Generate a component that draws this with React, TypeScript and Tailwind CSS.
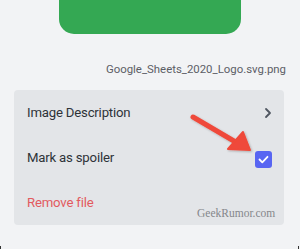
import React from "react";

export default function App() {
  return (
    <div
      className="relative w-[300px] h-[249px] overflow-hidden bg-[#f2f3f5]"
      style={{ fontFamily: "Roboto, 'Open Sans', sans-serif" }}
    >
      <div className="flex flex-col">
        <div className="mx-auto w-[182px] h-[34px] bg-[#34a853] rounded-b-[15px]" />
        <div className="mt-[28px] pr-[14px] text-right text-[11.4px] leading-[14px] text-[#5c5e66]">
          Google_Sheets_2020_Logo.svg.png
        </div>
        <div className="mt-[14px] mx-[14px] w-[270px] h-[135px] rounded-[4px] bg-[#e3e5e8] flex flex-col">
          <div className="h-[46px] flex items-center justify-between pl-[13px] pr-[12px] pt-[1px]">
            <span className="text-[13.2px] tracking-[-0.2px] text-[#2e3338]">Image Description</span>
            <svg width="8" height="12" viewBox="0 0 8 12" fill="none">
              <path d="M2 2l4 4-4 4" stroke="#4f5660" strokeWidth="1.8" strokeLinecap="round" strokeLinejoin="round" />
            </svg>
          </div>
          <div className="h-[46px] flex items-center justify-between pl-[13px] pr-[12px]">
            <span className="text-[13.2px] tracking-[-0.2px] text-[#2e3338]">Mark as spoiler</span>
            <div className="w-[17px] h-[17px] rounded-[3px] bg-[#5865f2] flex items-center justify-center mt-[4px]">
              <svg width="11" height="9" viewBox="0 0 11 9" fill="none">
                <path d="M1.5 4.5l2.8 2.8L9.5 1.8" stroke="white" strokeWidth="1.8" strokeLinecap="round" strokeLinejoin="round" />
              </svg>
            </div>
          </div>
          <div className="h-[46px] flex items-center pl-[13px]">
            <span className="text-[13.2px] tracking-[-0.2px] text-[#e25a5f]">Remove file</span>
          </div>
        </div>
      </div>
      <div
        className="absolute left-[197px] top-[205px] text-[11.5px] text-[#85878b]"
        style={{ fontFamily: "'Liberation Serif', serif" }}
      >
        GeekRumor.com
      </div>
      <svg className="absolute left-[185px] top-[108px]" width="72" height="50" viewBox="0 0 72 50">
        <defs>
          <filter id="sh" x="-20%" y="-20%" width="140%" height="140%">
            <feDropShadow dx="1" dy="1" stdDeviation="1" floodColor="#000" floodOpacity="0.25" />
          </filter>
        </defs>
        <g filter="url(#sh)">
          <path d="M8 9 L54 36" stroke="#ef4a3a" strokeWidth="5" strokeLinecap="round" />
          <path d="M65 42 L43 41 L58 24 Z" fill="#ef4a3a" stroke="#ef4a3a" strokeWidth="2" strokeLinejoin="round" />
        </g>
      </svg>
      <div className="absolute left-0 top-[246px] w-[1px] h-[3px] bg-[#333]" />
      <div className="absolute left-[298px] top-[246px] w-[1px] h-[3px] bg-[#333]" />
    </div>
  );
}
